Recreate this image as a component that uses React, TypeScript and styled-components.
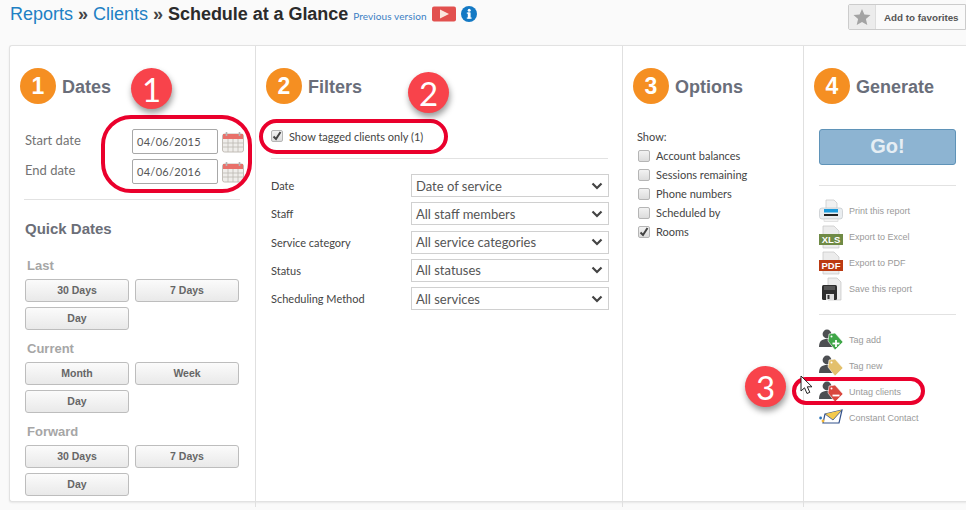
import React from "react"
import styled, { createGlobalStyle } from "styled-components"

const GlobalStyle = createGlobalStyle`
    html, body {
        margin: 0;
        padding: 0;
        background: #fafafa;
    }

    body {
        width: 966px;
        height: 510px;
        overflow: hidden;
        font-family: "Liberation Sans", Arial, sans-serif;
    }
`

const Page = styled.div`
    position: relative;
    width: 966px;
    height: 510px;
    overflow: hidden;
`

const Header = styled.header`
    display: flex;
    justify-content: space-between;
    height: 45px;
    padding: 4px 0 0 10px;
    box-sizing: border-box;
`

const Crumbs = styled.div`
    display: flex;
    align-items: center;
    height: 20px;
    font-size: 18px;
    line-height: 20px;
    color: #333;
    white-space: nowrap;
`

const CrumbLink = styled.a`
    color: #2180c4;
`

const Sep = styled.b`
    margin: 0 5px;
    color: #444;
`

const Current = styled.b`
    color: #2b2b2b;
    letter-spacing: -0.05px;
`

const Previous = styled.a`
    margin: 3px 5px 0 5px;
    font-family: Lato, sans-serif;
    font-size: 10px;
    letter-spacing: 0.1px;
    color: #3a7fc4;
`

const IconSlot = styled.span`
    display: flex;
    margin-right: 5px;
`

const FavButton = styled.button`
    display: flex;
    align-items: stretch;
    width: 118px;
    height: 26px;
    padding: 0;
    border: 1px solid #ccc;
    border-radius: 2px 0 0 2px;
    background: #fafafa;
    font-family: "Liberation Sans", sans-serif;
    font-size: 9.8px;
    font-weight: bold;
    color: #555;
`

const FavStar = styled.span`
    display: flex;
    align-items: center;
    justify-content: center;
    width: 26px;
    background: #ececec;
    border-right: 1px solid #ddd;
`

const FavLabel = styled.span`
    align-self: center;
    margin-left: 8px;
`

const Panel = styled.main`
    display: grid;
    grid-template-columns: 246px 367px 181px 1fr;
    width: 958px;
    height: 457px;
    margin-left: 9px;
    box-sizing: border-box;
    background: #fff;
    border: 1px solid #e2e2e2;
    border-right: none;
    border-radius: 3px 0 0 3px;
    box-shadow: 0 1px 2px rgba(0, 0, 0, 0.08);
`

const Column = styled.section<{ $last?: boolean }>`
    box-sizing: border-box;
    padding: 22px 0 0 10px;
    border-right: ${p => (p.$last ? "none" : "1px solid #e0e0e0")};
    min-width: 0;
`

const StepHead = styled.div<{ $bottom: number }>`
    display: flex;
    align-items: center;
    gap: 6px;
    height: 36px;
    margin-bottom: ${p => p.$bottom}px;
`

const StepBadge = styled.span`
    display: flex;
    align-items: center;
    justify-content: center;
    width: 36px;
    height: 36px;
    border-radius: 50%;
    background: #f58f22;
    color: #fff;
    font-size: 23px;
    font-weight: bold;
`

const StepTitle = styled.h2`
    margin: 2px 0 0;
    font-size: 18px;
    font-weight: bold;
    color: #6a6e7a;
`

const DateGrid = styled.div`
    display: grid;
    grid-template-columns: 107px 86px 26px;
    grid-auto-rows: 25px;
    row-gap: 5px;
    align-items: center;
    margin-left: 5px;
`

const DateLabel = styled.label`
    margin-bottom: 4px;
    font-family: Lato, sans-serif;
    font-size: 13px;
    color: #737373;
`

const DateInput = styled.div`
    box-sizing: border-box;
    height: 25px;
    padding: 0 4px;
    border: 1px solid #a8a8a8;
    border-radius: 2px;
    font-family: Lato, sans-serif;
    font-size: 11px;
    line-height: 24px;
    letter-spacing: 0.3px;
    color: #555;
`

const CalendarSlot = styled.span`
    display: flex;
    padding-left: 4px;
`

const Rule = styled.hr<{ $left: number; $width: number; $top: number; $bottom: number }>`
    width: ${p => p.$width}px;
    height: 1px;
    margin: ${p => p.$top}px 0 ${p => p.$bottom}px ${p => p.$left}px;
    border: none;
    background: #e2e2e2;
`

const QuickTitle = styled.h3`
    margin: 0 0 20px 5px;
    font-size: 15px;
    line-height: 18px;
    font-weight: bold;
    color: #6b6e78;
`

const QuickGroup = styled.div`
    margin: 0 0 0 5px;
`

const GroupLabel = styled.h4`
    height: 15px;
    margin: 0 0 6px 2px;
    font-size: 13px;
    line-height: 15px;
    font-weight: bold;
    color: #a6a6a6;
`

const ButtonGrid = styled.div`
    display: grid;
    grid-template-columns: 104px 104px;
    grid-auto-rows: 23px;
    column-gap: 6px;
    row-gap: 5px;
    margin-bottom: 11px;
`

const QuickButton = styled.button`
    padding: 0 0 1px;
    border: 1px solid #bdbdbd;
    border-radius: 3px;
    background: linear-gradient(#fbfbfb, #e9e9e9);
    font-family: "Liberation Sans", sans-serif;
    font-size: 10.5px;
    font-weight: bold;
    color: #666;
`

const TaggedRow = styled.label`
    display: flex;
    align-items: center;
    gap: 6px;
    height: 18px;
    margin-left: 5px;
    font-family: Lato, sans-serif;
    font-size: 11px;
    color: #444;
`

const Box = styled.span`
    display: flex;
    align-items: center;
    justify-content: center;
    box-sizing: border-box;
    width: 12px;
    height: 12px;
    border: 1px solid #b5b5b5;
    border-radius: 2px;
    background: linear-gradient(#f2f2f2, #dcdcdc);
`

const FilterGrid = styled.div`
    display: grid;
    grid-template-columns: 140px 198px;
    grid-auto-rows: 23px;
    row-gap: 5.3px;
    align-items: center;
    margin-left: 5px;
`

const FilterLabel = styled.span`
    font-family: Lato, sans-serif;
    font-size: 11px;
    color: #444;
`

const SelectBox = styled.div`
    display: flex;
    align-items: center;
    justify-content: space-between;
    box-sizing: border-box;
    height: 23px;
    padding: 0 5px 0 4px;
    border: 1px solid #d0d0d0;
    font-family: Lato, sans-serif;
    font-size: 13px;
    color: #555;
`

const OptionBlock = styled.div`
    padding-left: 4px;
`

const ShowLabel = styled.div`
    height: 16px;
    margin-bottom: 1px;
    font-family: Lato, sans-serif;
    font-size: 11px;
    line-height: 16px;
    color: #444;
`

const OptionRow = styled.label`
    display: flex;
    align-items: center;
    gap: 6px;
    height: 19px;
    margin-left: 1px;
    font-family: Lato, sans-serif;
    font-size: 11px;
    color: #444;
`

const GenerateBlock = styled.div`
    padding-left: 5px;
`

const GoButton = styled.button`
    display: block;
    box-sizing: border-box;
    width: 137px;
    height: 36px;
    padding: 0 0 2px;
    border: 1px solid #5f93b8;
    border-radius: 3px;
    background: #8db4d2;
    font-family: "Liberation Sans", sans-serif;
    font-size: 20px;
    font-weight: bold;
    color: #e6eef4;
`

const ActionList = styled.ul`
    margin: 0;
    padding: 0;
    list-style: none;
`

const ActionRow = styled.li`
    display: flex;
    align-items: center;
    gap: 6px;
    height: 26px;
    font-family: "Liberation Sans", sans-serif;
    font-size: 9px;
    color: #9a9a9a;
`

const ActionIcon = styled.span`
    display: flex;
    width: 24px;
    height: 24px;
`

const Marker = styled.span<{ $x: number; $y: number }>`
    position: absolute;
    left: ${p => p.$x}px;
    top: ${p => p.$y}px;
    display: flex;
    align-items: center;
    justify-content: center;
    width: 41px;
    height: 41px;
    border-radius: 50%;
    background: #f8434b;
    box-shadow: 1px 4px 6px rgba(0, 0, 0, 0.4);
    font-family: Lato, sans-serif;
    font-size: 33px;
    color: #fff;
`

const Oval = styled.span<{ $x: number; $y: number; $w: number; $h: number; $r: number }>`
    position: absolute;
    left: ${p => p.$x}px;
    top: ${p => p.$y}px;
    box-sizing: border-box;
    width: ${p => p.$w}px;
    height: ${p => p.$h}px;
    border: 4px solid #ea002c;
    border-radius: ${p => p.$r}px;
`

const Cursor = styled.svg`
    position: absolute;
    left: 800px;
    top: 375px;
`

const Chevron = () => (
    <svg width="12" height="8" viewBox="0 0 12 8">
        <path d="M1.5 1.5 6 6l4.5-4.5" fill="none" stroke="#444" strokeWidth="2.2" />
    </svg>
)

const Tick = () => (
    <svg width="10" height="10" viewBox="0 0 10 10">
        <path d="M1.5 5.5 4 8l4.5-7" fill="none" stroke="#444" strokeWidth="2" />
    </svg>
)

const CalendarIcon = () => (
    <svg width="22" height="22" viewBox="0 0 22 22">
        <rect x="0.5" y="3" width="21" height="18" rx="2" fill="#efedea" stroke="#c2bdb7" />
        <path d="M1 3h20v5H1z" fill="#e8706a" />
        <path d="M1 12h20M1 16h20M6 8v13M11 8v13M16 8v13" stroke="#bdb9b2" strokeWidth="0.8" />
        <path d="M4.5 1v4M17.5 1v4" stroke="#b5b5b5" strokeWidth="1.6" />
    </svg>
)

const PlayIcon = () => (
    <svg width="24" height="16" viewBox="0 0 24 16">
        <rect x="0" y="0.5" width="24" height="15" rx="2" fill="#e2504e" />
        <path d="M8 3.5 17 8l-9 4.5z" fill="#fbe6de" />
    </svg>
)

const InfoIcon = () => (
    <svg width="16" height="16" viewBox="0 0 16 16">
        <circle cx="8" cy="8" r="8" fill="#1479c4" />
        <rect x="6.8" y="6.5" width="2.8" height="6" fill="#fff" />
        <rect x="5.8" y="6.5" width="3" height="1.2" fill="#fff" />
        <rect x="5.8" y="11.5" width="4.8" height="1.2" fill="#fff" />
        <circle cx="8.2" cy="4.2" r="1.5" fill="#fff" />
    </svg>
)

const StarIcon = () => (
    <svg width="18" height="18" viewBox="0 0 18 18">
        <path d="M9 1l2.4 5.6 6.1.5-4.6 4 1.4 6L9 13.9 3.7 17.1l1.4-6-4.6-4 6.1-.5z" fill="#a3a3a3" />
    </svg>
)

const PrinterIcon = () => (
    <svg width="24" height="24" viewBox="0 0 24 24">
        <path d="M7 1h8l3 3v6H7z" fill="#f1f1f1" stroke="#c4c4c4" strokeWidth="0.7" />
        <rect x="0.5" y="9" width="23" height="11" rx="2.5" fill="#e9edf0" stroke="#c2c6c9" strokeWidth="0.7" />
        <rect x="5" y="10" width="14" height="3.5" fill="#1b9bdc" />
        <rect x="5" y="15" width="14" height="2" fill="#222" />
        <rect x="5" y="20" width="14" height="2.5" fill="#f4f4f4" stroke="#ccc" strokeWidth="0.5" />
    </svg>
)

const FileIcon = ({ color, label }: { color: string; label: string }) => (
    <svg width="24" height="24" viewBox="0 0 24 24">
        <path d="M4 1h11l5 5v17H4z" fill="#ececec" stroke="#c4c4c4" strokeWidth="0.7" />
        <rect x="0" y="9" width="24" height="11" fill={color} />
        <text x="12" y="18" textAnchor="middle" fontFamily="Liberation Sans" fontWeight="bold" fontSize="9.5" fill="#fff">{label}</text>
    </svg>
)

const SaveIcon = () => (
    <svg width="24" height="24" viewBox="0 0 24 24">
        <path d="M9 1h9l4 4v18H9z" fill="#ececec" stroke="#c4c4c4" strokeWidth="0.7" />
        <rect x="3" y="8" width="15" height="15" rx="1.5" fill="#2e2e2e" />
        <rect x="7" y="17" width="8" height="6" fill="#ddd" />
        <rect x="8.5" y="18" width="2" height="4" fill="#333" />
        <rect x="5" y="9" width="11" height="4" fill="#555" />
    </svg>
)

const TagUserIcon = ({ color, mark }: { color: string; mark?: "plus" | "minus" }) => (
    <svg width="24" height="24" viewBox="0 0 24 24">
        <circle cx="8" cy="6" r="4.4" fill="#4d4f52" />
        <path d="M0 19c0-6 3-8 8-8s7 3 7 8z" fill="#4d4f52" />
        <path d="M10 6l6-1 8 9-8 8-7-9z" fill={color} stroke="#fff" strokeWidth="0.6" />
        <circle cx="12.5" cy="8.5" r="1" fill="#fff" />
        {mark && <rect x="13.5" y="14.6" width="7" height="1.8" fill="#fff" />}
        {mark === "plus" && <rect x="16.1" y="12" width="1.8" height="7" fill="#fff" />}
    </svg>
)

const ContactIcon = () => (
    <svg width="24" height="24" viewBox="0 0 24 24">
        <path d="M6 8l17-4-3 13H4z" fill="#fff" stroke="#33528c" strokeWidth="1.2" />
        <path d="M6 8l8 6 9-10" fill="#f3c94c" stroke="#33528c" strokeWidth="0.8" />
        <circle cx="1.6" cy="12" r="1.4" fill="#2a74b8" />
        <circle cx="4" cy="15" r="1.4" fill="#f0b73a" />
    </svg>
)

const quickGroups = [
    { label: "Last", buttons: ["30 Days", "7 Days", "Day"] },
    { label: "Current", buttons: ["Month", "Week", "Day"] },
    { label: "Forward", buttons: ["30 Days", "7 Days", "Day"] },
]

const filters = [
    { label: "Date", value: "Date of service" },
    { label: "Staff", value: "All staff members" },
    { label: "Service category", value: "All service categories" },
    { label: "Status", value: "All statuses" },
    { label: "Scheduling Method", value: "All services" },
]

const options = [
    { label: "Account balances" },
    { label: "Sessions remaining" },
    { label: "Phone numbers" },
    { label: "Scheduled by" },
    { label: "Rooms", checked: true },
]

const reportActions = [
    { label: "Print this report", icon: <PrinterIcon /> },
    { label: "Export to Excel", icon: <FileIcon color="#6f8a45" label="XLS" /> },
    { label: "Export to PDF", icon: <FileIcon color="#bb3a12" label="PDF" /> },
    { label: "Save this report", icon: <SaveIcon /> },
]

const tagActions = [
    { label: "Tag add", icon: <TagUserIcon color="#3fa648" mark="plus" /> },
    { label: "Tag new", icon: <TagUserIcon color="#e3c06c" /> },
    { label: "Untag clients", icon: <TagUserIcon color="#d9483f" mark="minus" /> },
    { label: "Constant Contact", icon: <ContactIcon /> },
]

export default function App() {
    return (
        <Page>
            <GlobalStyle />
            <Header>
                <Crumbs>
                    <CrumbLink>Reports</CrumbLink>
                    <Sep>»</Sep>
                    <CrumbLink>Clients</CrumbLink>
                    <Sep>»</Sep>
                    <Current>Schedule at a Glance</Current>
                    <Previous>Previous version</Previous>
                    <IconSlot><PlayIcon /></IconSlot>
                    <IconSlot><InfoIcon /></IconSlot>
                </Crumbs>
                <FavButton>
                    <FavStar><StarIcon /></FavStar>
                    <FavLabel>Add to favorites</FavLabel>
                </FavButton>
            </Header>
            <Panel>
                <Column>
                    <StepHead $bottom={25}>
                        <StepBadge>1</StepBadge>
                        <StepTitle>Dates</StepTitle>
                    </StepHead>
                    <DateGrid>
                        <DateLabel>Start date</DateLabel>
                        <DateInput>04/06/2015</DateInput>
                        <CalendarSlot><CalendarIcon /></CalendarSlot>
                        <DateLabel>End date</DateLabel>
                        <DateInput>04/06/2016</DateInput>
                        <CalendarSlot><CalendarIcon /></CalendarSlot>
                    </DateGrid>
                    <Rule $left={4} $width={216} $top={15} $bottom={20} />
                    <QuickTitle>Quick Dates</QuickTitle>
                    {quickGroups.map(group => (
                        <QuickGroup key={group.label}>
                            <GroupLabel>{group.label}</GroupLabel>
                            <ButtonGrid>
                                {group.buttons.map(name => (
                                    <QuickButton key={name}>{name}</QuickButton>
                                ))}
                            </ButtonGrid>
                        </QuickGroup>
                    ))}
                </Column>
                <Column>
                    <StepHead $bottom={23}>
                        <StepBadge>2</StepBadge>
                        <StepTitle>Filters</StepTitle>
                    </StepHead>
                    <TaggedRow>
                        <Box><Tick /></Box>
                        Show tagged clients only (1)
                    </TaggedRow>
                    <Rule $left={5} $width={337} $top={13} $bottom={15} />
                    <FilterGrid>
                        {filters.map(filter => (
                            <React.Fragment key={filter.label}>
                                <FilterLabel>{filter.label}</FilterLabel>
                                <SelectBox>
                                    {filter.value}
                                    <Chevron />
                                </SelectBox>
                            </React.Fragment>
                        ))}
                    </FilterGrid>
                </Column>
                <Column>
                    <StepHead $bottom={25}>
                        <StepBadge>3</StepBadge>
                        <StepTitle>Options</StepTitle>
                    </StepHead>
                    <OptionBlock>
                        <ShowLabel>Show:</ShowLabel>
                        {options.map(option => (
                            <OptionRow key={option.label}>
                                <Box>{option.checked && <Tick />}</Box>
                                {option.label}
                            </OptionRow>
                        ))}
                    </OptionBlock>
                </Column>
                <Column $last>
                    <StepHead $bottom={25}>
                        <StepBadge>4</StepBadge>
                        <StepTitle>Generate</StepTitle>
                    </StepHead>
                    <GenerateBlock>
                        <GoButton>Go!</GoButton>
                        <Rule $left={0} $width={137} $top={20} $bottom={12} />
                        <ActionList>
                            {reportActions.map(action => (
                                <ActionRow key={action.label}>
                                    <ActionIcon>{action.icon}</ActionIcon>
                                    {action.label}
                                </ActionRow>
                            ))}
                        </ActionList>
                        <Rule $left={0} $width={137} $top={12} $bottom={12} />
                        <ActionList>
                            {tagActions.map(action => (
                                <ActionRow key={action.label}>
                                    <ActionIcon>{action.icon}</ActionIcon>
                                    {action.label}
                                </ActionRow>
                            ))}
                        </ActionList>
                    </GenerateBlock>
                </Column>
            </Panel>
            <Oval $x={101} $y={115} $w={151} $h={78} $r={30} />
            <Oval $x={259} $y={119} $w={189} $h={35} $r={18} />
            <Oval $x={792} $y={377} $w={133} $h={28} $r={14} />
            <Marker $x={131} $y={68}>1</Marker>
            <Marker $x={408} $y={72}>2</Marker>
            <Marker $x={745} $y={366}>3</Marker>
            <Cursor width="13" height="20" viewBox="0 0 13 20">
                <path d="M1 1v15l3.5-3.2L7 18.5l2.8-1.2-2.5-5.5H12z" fill="#fff" stroke="#222" strokeWidth="1" />
            </Cursor>
        </Page>
    )
}
